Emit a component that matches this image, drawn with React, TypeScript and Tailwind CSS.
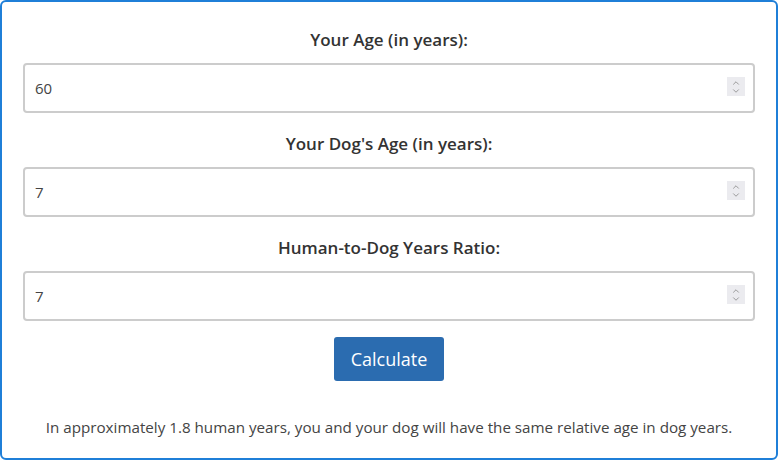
import { ChevronUp, ChevronDown } from "lucide-react";

function Field({ label, value }: { label: string; value: string }) {
  return (
    <div className="flex flex-col">
      <label className="text-center text-[17px] font-semibold text-[#333] leading-[24px] mb-[11px]">
        {label}
      </label>
      <div className="relative">
        <input
          type="text"
          defaultValue={value}
          className="w-full h-[50px] rounded-[4px] border-2 border-[#cccccc] bg-white pl-[10px] text-[15px] text-[#444] outline-none"
        />
        <div className="absolute right-[10px] top-[14px] w-[18px] h-[19px] bg-[#ebebef] flex flex-col items-center justify-center text-[#8a8a8a]">
          <ChevronUp className="w-[10px] h-[10px] -mb-[1px]" strokeWidth={2} />
          <ChevronDown className="w-[10px] h-[10px] -mt-[1px]" strokeWidth={2} />
        </div>
      </div>
    </div>
  );
}

export default function App() {
  return (
    <div
      className="w-[778px] h-[460px] border-2 border-[#1f7fd8] rounded-[6px] bg-white px-[21px] pt-[26px]"
      style={{ fontFamily: '"Open Sans", "Noto Sans", sans-serif' }}
    >
      <div className="flex flex-col gap-[19px]">
        <Field label="Your Age (in years):" value="60" />
        <Field label="Your Dog's Age (in years):" value="7" />
        <Field label="Human-to-Dog Years Ratio:" value="7" />
      </div>
      <div className="flex justify-center mt-[16px]">
        <button className="h-[44px] px-[17px] rounded-[3px] bg-[#2b6cb0] text-white text-[18px]">
          Calculate
        </button>
      </div>
      <p className="text-center text-[15.2px] text-[#444] mt-[35px]">
        In approximately 1.8 human years, you and your dog will have the same relative age in dog years.
      </p>
    </div>
  );
}
